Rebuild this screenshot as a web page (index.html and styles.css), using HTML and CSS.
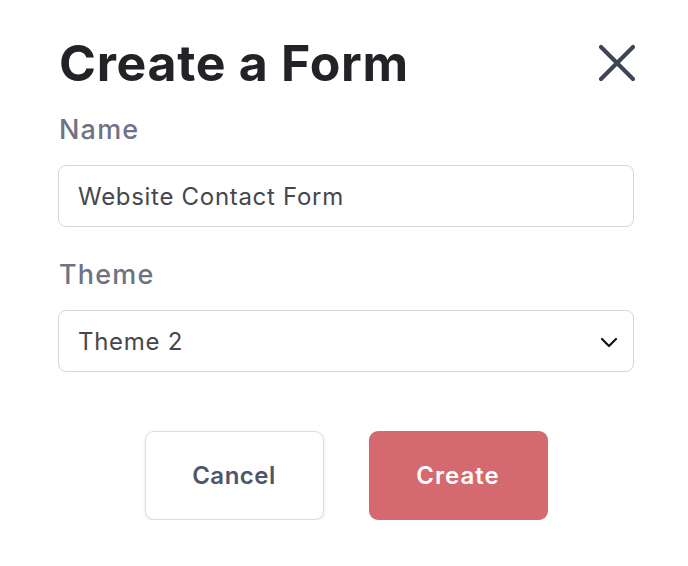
FILE: index.html
```html
<!DOCTYPE html>
<html lang="en">
<head>
<meta charset="utf-8">
<link rel="stylesheet" href="styles.css">
</head>
<body>
<div class="modal">
  <div class="header">
    <h1 class="title">Create a Form</h1>
    <button class="close" aria-label="Close">
      <svg width="40" height="40" viewBox="0 0 40 40"><path d="M4 4 L36 36 M36 4 L4 36" stroke="#3d4453" stroke-width="4.2" stroke-linecap="round" fill="none"/></svg>
    </button>
  </div>
  <label class="label">Name</label>
  <div class="field"><span class="value">Website Contact Form</span></div>
  <label class="label">Theme</label>
  <div class="field select"><span class="value">Theme 2</span>
    <svg class="chev" width="18" height="11" viewBox="0 0 18 11"><path d="M2 2 L9 9 L16 2" stroke="#111" stroke-width="2.2" fill="none" stroke-linecap="round" stroke-linejoin="round"/></svg>
  </div>
  <div class="actions">
    <button class="btn cancel">Cancel</button>
    <button class="btn create">Create</button>
  </div>
</div>
</body>
</html>
```
FILE: styles.css
```css
* { box-sizing: border-box; }
html, body { margin: 0; background: #fff; }
body { font-family: Inter, "Noto Sans", sans-serif; }
.modal { width: 688px; padding: 30px 51px 0 58px; display: flex; flex-direction: column; }
.header { display: flex; justify-content: space-between; align-items: center; height: 66px; }
.title { margin: 0 0 0 1px; font-size: 50px; font-weight: 700; color: #222326; letter-spacing: 0.7px; }
.close { background: none; border: 0; padding: 0; width: 40px; height: 40px; display: flex; }
.label { display: block; font-size: 27px; font-weight: 500; color: #6e7385; margin: 19px 0 20px 1px; line-height: 30px; letter-spacing: 1.2px; }
.field { height: 62px; border: 1px solid #d4d6da; border-radius: 8px; display: flex; align-items: center; padding: 0 19px; margin-right: 3px; }
.value { font-size: 24px; color: #45474d; letter-spacing: 0.7px; }
.select { justify-content: space-between; padding-right: 15px; }
.chev { margin-top: 2px; }
.field + .label { margin-top: 33px; }
.actions { display: flex; gap: 45px; justify-content: center; margin-top: 59px; padding-right: 3px; }
.btn { width: 179px; height: 89px; border-radius: 9px; font-family: inherit; font-size: 24px; font-weight: 600; border: 0; letter-spacing: 0.5px; }
.cancel { background: #fff; border: 1px solid #dcdde3; color: #4f5668; box-shadow: 0 2px 4px rgba(0,0,0,0.08); }
.create { background: #d4696f; color: #fff; letter-spacing: 1px; }
```
